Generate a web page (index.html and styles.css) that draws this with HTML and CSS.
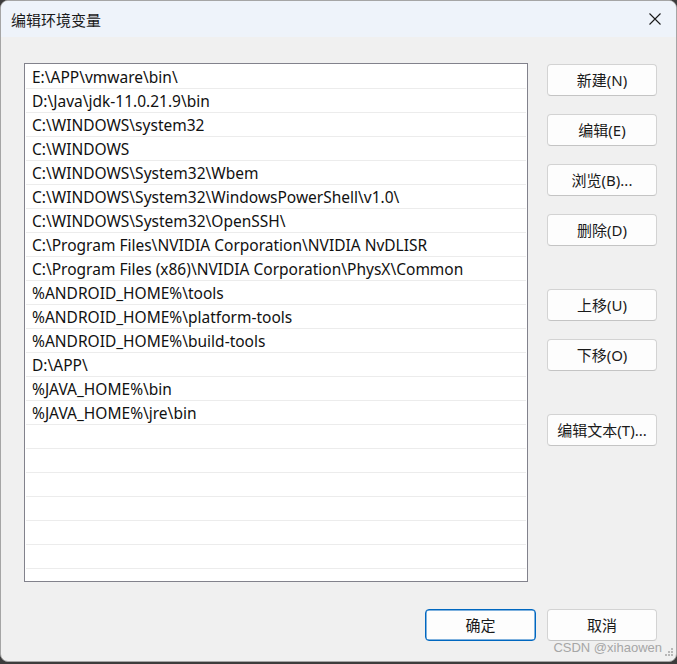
FILE: index.html
```html
<!DOCTYPE html>
<html lang="zh-CN">
<head>
<meta charset="utf-8">
<title>编辑环境变量</title>
<link rel="stylesheet" href="styles.css">
</head>
<body>
<div class="window">
  <div class="titlebar">
    <span class="title">编辑环境变量</span>
    <span class="close">
      <svg width="12" height="12" viewBox="0 0 12 12"><path d="M0.5 0.5 L11.5 11.5 M11.5 0.5 L0.5 11.5" stroke="#1a1a1a" stroke-width="1.1" fill="none"/></svg>
    </span>
  </div>
  <div class="content">
    <div class="list">
      <div class="row">E:\APP\vmware\bin\</div>
      <div class="row">D:\Java\jdk-11.0.21.9\bin</div>
      <div class="row">C:\WINDOWS\system32</div>
      <div class="row">C:\WINDOWS</div>
      <div class="row">C:\WINDOWS\System32\Wbem</div>
      <div class="row">C:\WINDOWS\System32\WindowsPowerShell\v1.0\</div>
      <div class="row">C:\WINDOWS\System32\OpenSSH\</div>
      <div class="row">C:\Program Files\NVIDIA Corporation\NVIDIA NvDLISR</div>
      <div class="row">C:\Program Files (x86)\NVIDIA Corporation\PhysX\Common</div>
      <div class="row">%ANDROID_HOME%\tools</div>
      <div class="row">%ANDROID_HOME%\platform-tools</div>
      <div class="row">%ANDROID_HOME%\build-tools</div>
      <div class="row">D:\APP\</div>
      <div class="row">%JAVA_HOME%\bin</div>
      <div class="row">%JAVA_HOME%\jre\bin</div>
      <div class="row"></div>
      <div class="row"></div>
      <div class="row"></div>
      <div class="row"></div>
      <div class="row"></div>
      <div class="row"></div>
    </div>
    <div class="side">
      <div class="group">
        <button class="btn">新建(N)</button>
        <button class="btn">编辑(E)</button>
        <button class="btn">浏览(B)...</button>
        <button class="btn">删除(D)</button>
      </div>
      <div class="group">
        <button class="btn">上移(U)</button>
        <button class="btn">下移(O)</button>
      </div>
      <div class="group">
        <button class="btn">编辑文本(T)...</button>
      </div>
    </div>
  </div>
  <div class="footer">
    <button class="btn primary">确定</button>
    <button class="btn">取消</button>
  </div>
  <span class="watermark">CSDN @xihaowen</span>
  <svg class="grip" width="12" height="12" viewBox="0 0 12 12">
    <g fill="#b8b8b8">
      <rect x="9" y="1" width="2" height="2"/>
      <rect x="6" y="4" width="2" height="2"/><rect x="9" y="4" width="2" height="2"/>
      <rect x="3" y="7" width="2" height="2"/><rect x="6" y="7" width="2" height="2"/><rect x="9" y="7" width="2" height="2"/>
    </g>
  </svg>
</div>
</body>
</html>
```

FILE: styles.css
```css
html, body {
  margin: 0;
  padding: 0;
}
body {
  background: #3c3c3c;
  width: 677px;
  height: 664px;
  overflow: hidden;
  font-family: "Noto Sans", "Noto Sans CJK SC", sans-serif;
  font-size: 15px;
  color: #000;
}
.window {
  position: relative;
  width: 677px;
  height: 662px;
  box-sizing: border-box;
  border: 1px solid #a5a5a5;
  border-radius: 8px;
  background: #f0f0f0;
  overflow: hidden;
}
.titlebar {
  height: 36px;
  background: #eef3fa;
  display: flex;
  align-items: center;
  justify-content: space-between;
  padding: 0 14px 0 10px;
}
.title {
  font-family: "Noto Sans CJK SC", sans-serif;
  font-size: 15px;
  color: #1a1a1a;
}
.close {
  display: flex;
  width: 12px;
  height: 12px;
  margin-right: 1px;
}
.content {
  display: flex;
  gap: 19px;
  padding: 26px 0 0 23px;
}
.list {
  width: 504px;
  height: 519px;
  box-sizing: border-box;
  border: 1px solid #82828c;
  background: #fff;
  padding-top: 1px;
  overflow: hidden;
}
.row {
  height: 24px;
  box-sizing: border-box;
  margin: 0 1px;
  border-bottom: 1px solid #ececec;
  padding: 1px 0 0 6px;
  line-height: 23px;
  font-size: 15.5px;
  color: #111;
  white-space: nowrap;
}
.side {
  display: flex;
  flex-direction: column;
  gap: 43px;
  padding-top: 1px;
}
.group {
  display: flex;
  flex-direction: column;
  gap: 18px;
}
.btn {
  width: 110px;
  height: 32px;
  box-sizing: border-box;
  margin: 0;
  padding: 0;
  background: #fdfdfd;
  border: 1px solid #d3d3d3;
  border-bottom-color: #c4c4c4;
  border-radius: 4px;
  font-family: "Noto Sans", "Noto Sans CJK SC", sans-serif;
  font-size: 15px;
  color: #1a1a1a;
  line-height: 30px;
}
.btn.primary {
  width: 111px;
  border: 1px solid #0067c0;
  box-shadow: inset 0 0 0 0.5px #0067c0;
}
.footer {
  display: flex;
  justify-content: flex-end;
  gap: 11px;
  padding: 27px 19px 0 0;
}
.watermark {
  position: absolute;
  right: 14px;
  bottom: 6px;
  font-family: "Liberation Sans", sans-serif;
  font-size: 13px;
  color: #a6a6a6;
}
.grip {
  position: absolute;
  right: 2px;
  bottom: 2px;
}
```
